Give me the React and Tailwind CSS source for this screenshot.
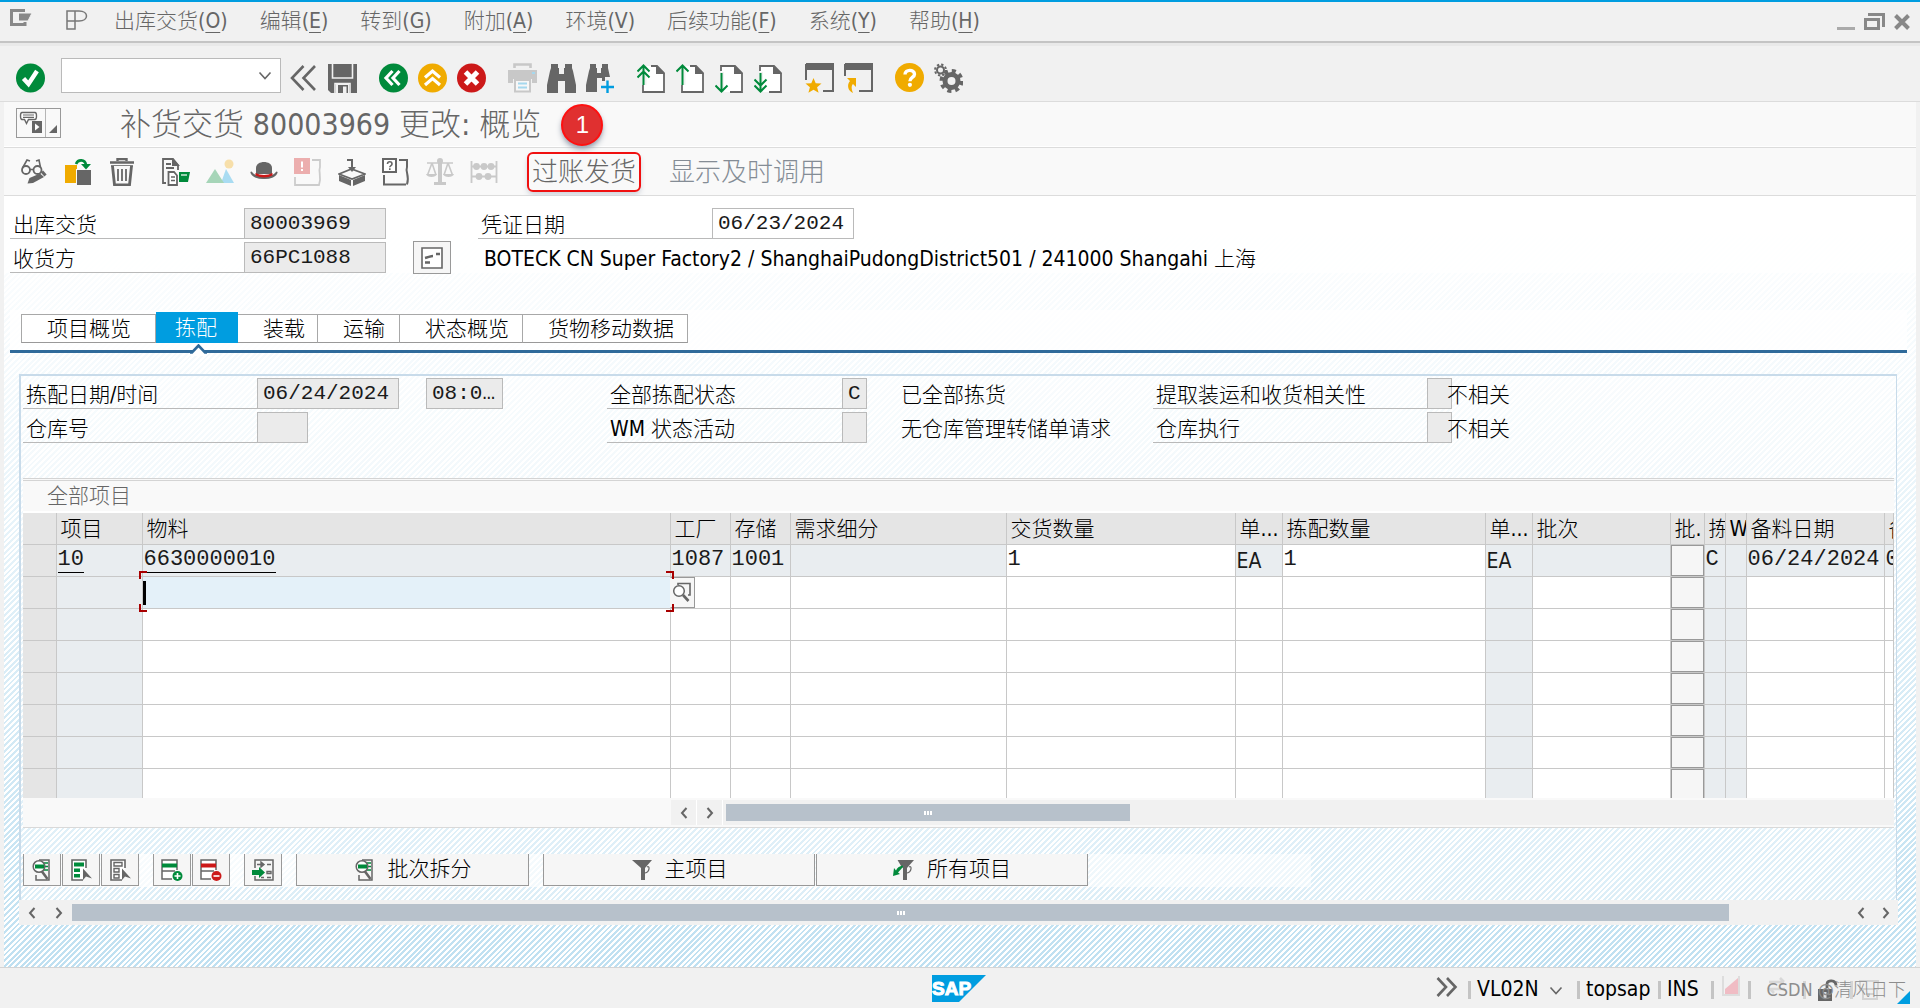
import React from "react";

const G = "#666666";
const GREEN = "#008a3b";
const BLUE = "#009de0";
const AMBER = "#f0ab00";
const RED = "#cc1919";

/* ---------- icons ---------- */

const Svg = ({ w = 29, h = 30, vb, children }) => (
  <svg width={w} height={h} viewBox={vb || `0 0 ${w} ${h}`} fill="none" className="block shrink-0" aria-hidden="true">
    {children}
  </svg>
);

const IconOk = () => (
  <Svg>
    <circle cx="14.5" cy="15" r="14.5" fill={GREEN} />
    <path d="M7.5 15.5 12.5 21 21 8" stroke="#fff" strokeWidth="4.4" />
  </Svg>
);
const IconCollapse = () => (
  <Svg>
    <path d="M14.5 3 3 15l11.500 12M26 3 14.500 15 26 27" stroke={G} strokeWidth="2.600" />
  </Svg>
);
const IconSave = () => (
  <Svg>
    <path d="M0 1h29v29H3l-3-3z" fill={G} />
    <path d="M4.500 1v14h20V1M7 30v-9.500h15V30" stroke="#f1f1f1" strokeWidth="1.600" />
    <path d="M8 21h13v9H8z" fill="#f1f1f1" />
    <path d="M10 22h10v8H10z" fill={G} />
    <path d="M15 23.500h3.500V30H15z" fill="#f1f1f1" />
  </Svg>
);
const IconBack = () => (
  <Svg>
    <circle cx="14.500" cy="15" r="14.500" fill={GREEN} />
    <path d="M13.500 8 7 15l6.500 7M20.500 8 14 15l6.500 7" stroke="#fff" strokeWidth="3.200" />
  </Svg>
);
const IconUp = () => (
  <Svg>
    <circle cx="14.500" cy="15" r="14.500" fill={AMBER} />
    <path d="M7 14.500 14.500 8l7.500 6.500M7 22l7.500-6.500L22 22" stroke="#fff" strokeWidth="3.200" />
  </Svg>
);
const IconCancel = () => (
  <Svg>
    <circle cx="14.500" cy="15" r="14.500" fill={RED} />
    <path d="m8.500 9 12 12m0-12-12 12" stroke="#fff" strokeWidth="5" />
  </Svg>
);
const IconPrint = () => (
  <Svg>
    <path d="M6.500 5V1.500h16V5" stroke="#c8c8c8" strokeWidth="2.600" />
    <path d="M0 7h29v13h-5v-4H5v4H0z" fill="#c8c8c8" />
    <path d="M7 17h15v11.500H7z" stroke="#c8c8c8" strokeWidth="2" fill="#f7f7f7" />
    <path d="M10 20.500h9M10 24.500h9M24 10h3" stroke="#a5d8ee" strokeWidth="2" />
  </Svg>
);
const IconFind = () => (
  <Svg>
    <path d="M4 1h7v4h1v6h5V5h1V1h7v4l1 3 3 14v8H18v-12h-7v12H0v-8L3 8l1-3z" fill={G} />
  </Svg>
);
const IconFindNext = () => (
  <Svg>
    <path d="M4 1h6v4h1v5h4V5h1V1h6v4l2 9h-5v4h-3v-3h-5v14H0v-7L3 8l1-3z" fill={G} />
    <path d="M15 24h13M21.500 17.500v12.500" stroke={BLUE} strokeWidth="2.400" />
  </Svg>
);
const Sheet = ({ children }) => (
  <Svg>
    <path d="M6 3h14l7 7v19H6z" fill="#fff" />
    <path d="M14 3h6l7 7v19H6v-9" stroke={G} strokeWidth="1.800" />
    <path d="M19 2v9h9z" fill={G} />
    {children}
  </Svg>
);
const IconFirst = () => (
  <Sheet>
    <path d="M6.500 3v19" stroke="#f1f1f1" strokeWidth="6" />
    <path d="M6.500 3v19M.500 8.500l6-6 6 6M.500 14.500l6-6 6 6" stroke={GREEN} strokeWidth="2" />
  </Sheet>
);
const IconPrev = () => (
  <Sheet>
    <path d="M6.500 3v19" stroke="#f1f1f1" strokeWidth="6" />
    <path d="M6.500 3v19M.500 8.500l6-6 6 6" stroke={GREEN} strokeWidth="2" />
  </Sheet>
);
const SheetDown = ({ children }) => (
  <Svg>
    <path d="M6 3h14l7 7v19H6z" fill="#fff" />
    <path d="M6 8V3h14l7 7v19H15" stroke={G} strokeWidth="1.800" />
    <path d="M19 2v9h9z" fill={G} />
    <path d="M6.500 9v20" stroke="#f1f1f1" strokeWidth="5" />
    {children}
  </Svg>
);
const IconNext = () => (
  <SheetDown>
    <path d="M6.500 10v18M.500 22.500l6 6 6-6" stroke={GREEN} strokeWidth="2" />
  </SheetDown>
);
const IconLast = () => (
  <SheetDown>
    <path d="M6.500 10v18M.500 16.500l6 6 6-6M.500 22.500l6 6 6-6" stroke={GREEN} strokeWidth="2" />
  </SheetDown>
);
const IconSession = () => (
  <Svg>
    <path d="M1 1h27v27H18M1 17V1" stroke={G} strokeWidth="2" />
    <path d="M0 1h29v6H0z" fill={G} />
    <path d="m8.500 15 2.200 5.300 5.800.300-4.400 3.700 1.500 5.500-5.100-3.100-5.100 3.100 1.500-5.500-4.400-3.700 5.800-.300z" fill={AMBER} />
  </Svg>
);
const IconShortcut = () => (
  <Svg>
    <path d="M1 1h27v27H15M1 13V1" stroke={G} strokeWidth="2" />
    <path d="M0 1h29v6H0z" fill={G} />
    <path d="M3 15h9v9l-3-3c-2 2-1.500 5 0 9-5-2-6.500-8-3-12z" fill={AMBER} />
  </Svg>
);
const IconHelp = () => (
  <Svg>
    <circle cx="14.500" cy="14.500" r="14.500" fill={AMBER} />
    <path d="M10 11.500c0-5.500 9.500-5.500 9.500-.300 0 3.300-4.600 3.300-4.600 7" stroke="#fff" strokeWidth="3.400" />
    <circle cx="14.900" cy="21.800" r="2.100" fill="#fff" />
  </Svg>
);
const IconGears = () => (
  <Svg>
    <circle cx="6.500" cy="7" r="3.500" stroke={G} strokeWidth="2" />
    <circle cx="6.500" cy="7" r="5.500" stroke={G} strokeWidth="2" strokeDasharray="2.300 2.020" />
    <circle cx="17.500" cy="18" r="6.500" stroke={G} strokeWidth="5" />
    <circle cx="17.500" cy="18" r="10" stroke={G} strokeWidth="4" strokeDasharray="4 3.850" />
  </Svg>
);

const IconGlasses = () => (
  <Svg w={28} h={28}>
    <circle cx="6" cy="12" r="4" stroke={G} strokeWidth="1.800" />
    <circle cx="17.500" cy="12" r="4" stroke={G} strokeWidth="1.800" />
    <path d="M10 11.500h4M2.500 10 7 2l3 1M20.500 9.500 19 2l-3 1" stroke={G} strokeWidth="1.600" />
    <path d="m7.500 25.500 2-5.500L20 15.500l4 3.500-11 6z" fill={G} />
    <path d="m22 13.500 3.500 4" stroke={G} strokeWidth="3" />
  </Svg>
);
const IconCopyTo = () => (
  <Svg w={28} h={28}>
    <path d="M1 7h12v4h-1v14H1z" fill={AMBER} />
    <path d="M13 12h14v15H13z" fill={G} />
    <path d="M12 6c2-5 9-5 10 1" stroke={GREEN} strokeWidth="2.600" />
    <path d="M17 6h10l-5 5.500z" fill={GREEN} />
  </Svg>
);
const IconTrash = () => (
  <Svg w={28} h={28}>
    <path d="M2 4.500h24M9.500 3V1h9v2" stroke={G} strokeWidth="2.400" />
    <path d="M3 8h22" stroke={G} strokeWidth="1.600" />
    <path d="m4.500 8 2 19h15l2-19" fill="#f9f9f9" stroke={G} strokeWidth="2.800" />
    <path d="M10 11v12M14 11v12M18 11v12" stroke={G} strokeWidth="1.800" />
  </Svg>
);
const IconDocFlow = () => (
  <Svg w={28} h={28}>
    <path d="M4 25H1V1h10l5 6v5" stroke={G} strokeWidth="1.800" />
    <path d="M10 0v8h8z" fill={G} />
    <path d="M4 6h5M4 10h8" stroke={G} strokeWidth="1.800" />
    <path d="M6.500 14H12l3 3.500V27H6.500z" fill="#fff" stroke={G} strokeWidth="1.800" />
    <path d="M9 19h4M9 22.500h4" stroke={G} strokeWidth="1.600" />
    <path d="M17 14h11l-2 10h-9z" fill={GREEN} />
    <path d="M19 17h6" stroke="#fff" strokeWidth="1.200" />
  </Svg>
);
const IconPicture = () => (
  <Svg w={28} h={28}>
    <circle cx="23" cy="6" r="4.500" fill="#f7dfaa" />
    <path d="m15 25 5-14 8 14z" fill="#a9dcf2" />
    <path d="M0 25 9 11l9 14z" fill="#a6d5b8" />
  </Svg>
);
const IconHat = () => (
  <Svg w={28} h={28}>
    <path d="M6 16V10c0-8 16-8 16 0v6z" fill={G} />
    <path d="M1 14c5 7 21 7 26 0-1 8.500-25 8.500-26 0z" stroke={G} strokeWidth="1.400" fill={G} />
    <path d="M5.500 15c5 2.500 12 2.500 17 0v2.500c-5 2.500-12 2.500-17 0z" fill={RED} />
  </Svg>
);
const IconIncomplete = () => (
  <Svg w={28} h={28}>
    <path d="M1 19v8h18M18 2h8v7c-2 5 2 9-1 18h-6" stroke="#cccccc" strokeWidth="1.800" />
    <path d="M0 0h16v16H0z" fill="#ecaeae" />
    <path d="M8 3.500v6M8 11v2" stroke="#fff" strokeWidth="2" />
  </Svg>
);
const IconPack = () => (
  <Svg w={28} h={28}>
    <path d="m1 16 12.500-5L27 16l-13 5z" stroke={G} strokeWidth="1.800" fill="#f9f9f9" />
    <path d="m1 17 12 5v6L1 23zM27 17l-12 5v6l12-5z" fill={G} />
    <path d="M9 2h5v9" stroke={G} strokeWidth="2" />
    <path d="M10 9h8l-4 5z" fill={G} />
  </Svg>
);
const IconQuestionDoc = () => (
  <Svg w={28} h={28}>
    <path d="M2 17v9.500h22M17 2h8v7c-2 5 3 9 0 17.500" stroke={G} strokeWidth="2" />
    <path d="M1 1h13v13H1z" stroke={G} strokeWidth="2" fill="#fff" />
    <path d="M5.500 6c0-3 4.500-3 4.500 0 0 1.600-2.200 1.600-2.200 3.300M7.800 10.300v1.700" stroke={G} strokeWidth="1.600" />
  </Svg>
);
const IconScales = () => (
  <Svg w={28} h={28}>
    <path d="M1 5h26M6 5 1.500 17M6 5l4 12M22 5l-4 12M22 5l4.500 12" stroke="#c9c9c9" strokeWidth="1.600" />
    <path d="M0 16h11c-1 4-10 4-11 0zM17 16h11c-1 4-10 4-11 0zM12 2h4v22h4v3H8v-3h4z" fill="#c9c9c9" />
    <circle cx="14" cy="3" r="3" fill="#c9c9c9" />
  </Svg>
);
const IconAbacus = () => (
  <Svg w={28} h={28}>
    <path d="M1.500 3v22M26.500 3v22M1 8.500h26M1 18.500h26" stroke="#c9c9c9" strokeWidth="1.800" />
    <g fill="#c9c9c9">
      <circle cx="6.500" cy="8.500" r="3.400" /><circle cx="14" cy="8.500" r="3.400" /><circle cx="21" cy="8.500" r="3.400" />
      <circle cx="9" cy="18.500" r="3.400" /><circle cx="18" cy="18.500" r="3.400" />
    </g>
  </Svg>
);
const IconServices = () => (
  <Svg w={24} h={24}>
    <path d="M3 1.500h13c2 0 2 7 0 7h-6.500l-2 4-2-4H3c-2 0-2-7 0-7z" stroke={G} strokeWidth="1.400" fill="#fff" />
    <path d="M4 4h11M4 6.300h11" stroke={G} strokeWidth="1.200" />
    <path d="M13 10h10v12H13z" fill={G} />
    <path d="M16 12.500v7l4.500-3.500z" fill="#fff" />
  </Svg>
);

const IconDetail = () => (
  <Svg w={22} h={22}>
    <path d="M8 1h10v20H5v-5" stroke={G} strokeWidth="1.500" />
    <path d="M13 4h4M13 7.500h4M13 11h4" stroke={GREEN} strokeWidth="1.500" />
    <circle cx="8" cy="7.500" r="5.800" fill="#fff" stroke={G} strokeWidth="1.500" />
    <path d="M4 5.500h9v4H4z" fill={GREEN} />
    <path d="m11 12.500 5.500 7.500" stroke={G} strokeWidth="2.600" />
  </Svg>
);
const IconSelect = ({ on }) => (
  <Svg w={22} h={22}>
    <path d="M16 9V1H2v20h11" stroke={G} strokeWidth="1.600" fill="#fff" />
    {on ? (
      <path d="M4 3.500h10v4H4zM4 9.500h6v3.500H4zM4 15h6v3.500H4z" fill={GREEN} />
    ) : (
      <path d="M5 3.500h8V7H5zM5 9.500h5v3.500H5zM5 15.500h5V19H5z" stroke={G} strokeWidth="1.400" />
    )}
    <path d="M13 9.500V21l3-3.500 6 2z" fill={G} />
  </Svg>
);
const IconRow = ({ add }) => (
  <Svg w={22} h={22}>
    <path d="M16 11V1H1v19h10M1 12h13" stroke={G} strokeWidth="1.500" fill="#fff" />
    <path d="M1 4.500h15v4H1z" fill={add ? GREEN : RED} />
    <circle cx="16.500" cy="17" r="5" fill={add ? GREEN : RED} />
    <path d={add ? "M13.500 17h6M16.500 14v6" : "M13.500 17h6"} stroke="#fff" strokeWidth="1.600" />
  </Svg>
);
const IconConfig = () => (
  <Svg w={22} h={22}>
    <path d="M3 9V1h18v20H3v-4" stroke={G} strokeWidth="1.500" />
    <path d="M5 5.500h6M9 3l3 2.500L9 8zM15 5.500h4M15 12.500h4v2h-4zM9 18.500h3M15 18.500h4" stroke={G} strokeWidth="1.400" />
    <path d="M0 11h7V8l6 5.500-6 5.500v-3H0z" fill={GREEN} />
  </Svg>
);
const IconFilter = ({ undo }) => (
  <Svg w={22} h={22}>
    <path d="M1 1h20l-7 8v12h-4V9z" fill={G} />
    <path d="M16 8c3-2 3 5-2 6" stroke={G} strokeWidth="1.200" />
    {undo && (
      <>
        <path d="M0 0h4l4 7H0z" fill="#f6f6f6" />
        <path d="M1 9 0 17l7-2-2-1.500 5-5.500V6.500C6 7 4 9 3 11.500z" fill={GREEN} />
      </>
    )}
  </Svg>
);
const IconMatch = () => (
  <Svg w={20} h={20}>
    <path d="M6 3V1.500h12V13h-2" stroke={G} strokeWidth="1.600" />
    <circle cx="7" cy="9" r="5.300" stroke={G} strokeWidth="1.500" fill="#fff" />
    <path d="m11 13 5.500 6" stroke={G} strokeWidth="2.600" />
  </Svg>
);
const Chevron = ({ dir }) => (
  <Svg w={8} h={12}>
    <path d={dir === "left" ? "M6.500 1 2 6l4.500 5" : "M1.500 1 6 6l-4.500 5"} stroke="#666" strokeWidth="2" />
  </Svg>
);
const ChevronDown = () => (
  <Svg w={14} h={9}>
    <path d="m1.500 1.500 5.500 6 5.500-6" stroke="#666" strokeWidth="1.600" />
  </Svg>
);
const SapLogo = () => (
  <svg width="54" height="27" viewBox="0 0 54 27" className="block" role="img" aria-label="SAP">
    <path d="M0 0h54L27 27H0z" fill={BLUE} />
    <text x="0" y="20" fill="#fff" stroke="#fff" strokeWidth="1" fontFamily="Liberation Sans, sans-serif" fontWeight="700" fontSize="19">SAP</text>
  </svg>
);

/* ---------- parts ---------- */

const Key = ({ text, k }) => (
  <button type="button" className="whitespace-nowrap">
    {text}(<u className="decoration-1 underline-offset-4">{k}</u>)
  </button>
);

const Tool = ({ label, children }) => (
  <button type="button" aria-label={label} className="shrink-0">{children}</button>
);

const Label = ({ id, w = "w-[234px]", children }) => (
  <label htmlFor={id} className={`h-[31px] shrink-0 border-b border-[#b9b9b9] pt-0.5 pl-[3px] leading-[30px] whitespace-nowrap ${w}`}>
    {children}
  </label>
);

const Field = ({ id, w = "w-[142px]", value = "", edit, label }) => (
  <input
    id={id}
    aria-label={label}
    readOnly={!edit}
    defaultValue={value}
    className={`h-[31px] shrink-0 border border-[#bababa] px-[5px] font-['Liberation_Mono',monospace] text-[21px] text-ellipsis text-[#1a1a1a] outline-none ${edit ? "bg-white" : "bg-[#ebebeb]"} ${w}`}
  />
);

const menus = [
  ["出库交货", "O"], ["编辑", "E"], ["转到", "G"], ["附加", "A"],
  ["环境", "V"], ["后续功能", "F"], ["系统", "Y"], ["帮助", "H"],
];

const tabs = [
  ["项目概览", "w-[135px] pl-[25px]"],
  ["拣配", "w-[82px] pl-[19px]"],
  ["装载", "w-[80px] pl-[25px]"],
  ["运输", "w-[82px] pl-[25px]"],
  ["状态概览", "w-[123px] pl-[25px]"],
  ["货物移动数据", "w-[165px] pl-[25px]"],
];

const cols = [
  { w: "w-[33px]", h: "" },
  { w: "w-[86px]", h: "项目" },
  { w: "w-[528px]", h: "物料" },
  { w: "w-[60px]", h: "工厂" },
  { w: "w-[60px]", h: "存储" },
  { w: "w-[216px]", h: "需求细分" },
  { w: "w-[229px]", h: "交货数量" },
  { w: "w-[47px]", h: "单..." },
  { w: "w-[203px]", h: "拣配数量" },
  { w: "w-[47px]", h: "单..." },
  { w: "w-[138px]", h: "批次" },
  { w: "w-[34px]", h: "批." },
  { w: "w-[21px]", h: "拣" },
  { w: "w-[21px]", h: "W" },
  { w: "w-[138px]", h: "备料日期" },
  { w: "", h: "备" },
];
const first = ["", "10", "6630000010", "1087", "1001", "", "1", "EA", "1", "EA", "", "", "C", "", "06/24/2024", "0"];

const Cell = ({ row, col }) => {
  const base = "relative h-8 border-b border-r border-[#c8c8c8] p-0 align-middle whitespace-nowrap";
  if (col === 0) return <td className={`${base} bg-[#e5e5e5]`} />;
  if (col === 11)
    return (
      <td className={`${base} bg-white`}>
        <button type="button" aria-label="批次拆分" className="block h-[31px] w-full border border-[#999] bg-[#f6f6f6]" />
      </td>
    );
  if (row === 1 && col === 2)
    return (
      <td className={`${base} z-10 overflow-visible bg-[#e4f1f9]`}>
        <input aria-label="物料" className="block h-[31px] w-full bg-transparent px-1 font-['Liberation_Mono',monospace] text-[22px] outline-none" />
        <span className="absolute top-1 left-0 h-6 w-[3px] bg-black" />
        <span className="absolute -top-1.5 -left-1 h-2 w-2 border-t-2 border-l-2 border-[#a80000]" />
        <span className="absolute -bottom-1 -left-1 h-2 w-2 border-b-2 border-l-2 border-[#a80000]" />
        <button type="button" aria-label="搜索帮助" className="absolute top-0 left-full flex h-[31px] w-[25px] items-center justify-center border border-[#999] border-l-transparent bg-[#f6f6f6]">
          <IconMatch />
        </button>
        <span className="absolute -top-1.5 -right-1 h-2 w-2 border-t-2 border-r-2 border-[#a80000]" />
        <span className="absolute -right-1 -bottom-1 h-2 w-2 border-r-2 border-b-2 border-[#a80000]" />
      </td>
    );
  const shaded = [1, 9, 12, 13].includes(col) || (row === 0 && col !== 6 && col !== 8);
  const text = row === 0 ? first[col] : "";
  const unit = col === 7 || col === 9;
  return (
    <td className={`${base} overflow-hidden pl-px ${shaded ? "bg-[#e9edf0]" : "bg-white"} ${unit ? "pt-0.5 text-[21px]" : "font-['Liberation_Mono',monospace] text-[22px]"} leading-none text-[#1a1a1a]`}>
      {text && (col === 1 || col === 2) ? (
        <a href="#item" className="block h-[25px] w-fit border-b border-black pt-px">{text}</a>
      ) : (
        text
      )}
    </td>
  );
};

const Grip = () => (
  <span className="flex gap-px">
    <i className="h-1 w-0.5 bg-white" />
    <i className="h-1 w-0.5 bg-white" />
    <i className="h-1 w-0.5 bg-white" />
  </span>
);

const IconButton = ({ label, children }) => (
  <button type="button" aria-label={label} className="flex h-8 w-[38px] items-center justify-center border border-t-0 border-[#999] bg-[#f6f6f6]">
    {children}
  </button>
);
const TextButton = ({ w, icon, children }) => (
  <button type="button" className={`flex h-8 items-center justify-center gap-3 border border-t-0 border-[#999] bg-[#f6f6f6] ${w}`}>
    {icon}
    {children}
  </button>
);

const Bar = () => <span className="h-[18px] w-[3px] shrink-0 bg-[#c4c4c4]" />;

export default function App() {
  return (
    <div className="flex min-h-screen flex-col overflow-x-hidden bg-[#f1f1f1] font-['DejaVu_Sans_Condensed','Noto_Sans_CJK_SC',sans-serif] text-[21px] font-light text-black">
      {/* menu bar */}
      <header className="flex h-[43px] shrink-0 items-center border-t-2 border-b-2 border-t-[#009de0] border-b-[#c4c4c4] pl-2.5 text-[#666]">
        <button type="button" aria-label="系统菜单" className="-mt-2 mr-[34px]">
          <Svg w={22} h={17}>
            <path d="M15 1.500H1.500v14H15V13" stroke="#888" strokeWidth="3" />
            <path d="M7 4h15l-4 8H8z" fill="#888" stroke="#f1f1f1" strokeWidth="1" />
            <path d="M4 4h5v8H4z" fill="#f1f1f1" />
          </Svg>
        </button>
        <button type="button" aria-label="会话" className="mr-[26px] -mt-1">
          <Svg w={22} h={20}>
            <path d="M1 19V1h12c10 0 10 10 0 10H9v8zM1 11h8V1" stroke="#777" strokeWidth="1.500" />
          </Svg>
        </button>
        <nav className="flex flex-1 items-center gap-8">
          {menus.map(([t, k]) => <Key key={k} text={t} k={k} />)}
        </nav>
        <div className="flex items-center gap-[9px] pr-2.5">
          <button type="button" aria-label="最小化"><Svg w={18} h={17}><path d="M0 14h18v3H0z" fill="#aaa" /></Svg></button>
          <button type="button" aria-label="还原">
            <Svg w={21} h={17}>
              <path d="M1.500 6.500h13v9h-13z" stroke="#888" strokeWidth="3" />
              <path d="M4 1.500h15.500V14" stroke="#888" strokeWidth="3" />
            </Svg>
          </button>
          <button type="button" aria-label="关闭"><Svg w={16} h={17}><path d="m1.500 2.500 13 13m0-13-13 13" stroke="#888" strokeWidth="4" /></Svg></button>
        </div>
      </header>

      {/* standard toolbar */}
      <div className="flex h-[59px] shrink-0 items-center gap-2.5 border-t-[3px] border-b border-t-[#e9e9e9] border-b-[#dcdcdc] pt-2 pl-4">
        <Tool label="确认"><IconOk /></Tool>
        <div className="-mt-1 -mr-0.5 ml-1.5 flex h-[35px] w-[220px] items-center border border-[#bababa] bg-white pr-2">
          <input aria-label="命令" className="h-full min-w-0 flex-1 px-2 outline-none" />
          <button type="button" aria-label="命令历史"><ChevronDown /></button>
        </div>
        <Tool label="折叠"><IconCollapse /></Tool>
        <Tool label="保存"><IconSave /></Tool>
        <span className="w-0.5" />
        <Tool label="返回"><IconBack /></Tool>
        <Tool label="退出"><IconUp /></Tool>
        <Tool label="取消"><IconCancel /></Tool>
        <span className="w-0.5" />
        <Tool label="打印"><IconPrint /></Tool>
        <Tool label="查找"><IconFind /></Tool>
        <Tool label="查找下一个"><IconFindNext /></Tool>
        <span className="w-0.5" />
        <Tool label="首页"><IconFirst /></Tool>
        <Tool label="上一页"><IconPrev /></Tool>
        <Tool label="下一页"><IconNext /></Tool>
        <Tool label="末页"><IconLast /></Tool>
        <span className="w-0.5" />
        <Tool label="新建会话"><IconSession /></Tool>
        <Tool label="创建快捷方式"><IconShortcut /></Tool>
        <span className="w-0.5" />
        <Tool label="帮助"><IconHelp /></Tool>
        <Tool label="自定义布局"><IconGears /></Tool>
      </div>

      <main className="mx-1 flex flex-1 flex-col bg-[#f9f9f9]">
        {/* title */}
        <div className="flex h-[46px] items-center border-b border-[#dcdcdc] pl-3 shadow-[inset_0_-1px_0_#fff]">
          <button type="button" aria-label="对象服务" className="-mt-1 flex h-[30px] w-[45px] border border-[#999]">
            <span className="flex h-full w-[29px] items-center justify-center border-r border-[#b5b5b5]"><IconServices /></span>
            <span className="flex h-full flex-1 items-end justify-center pb-1"><Svg w={8} h={8}><path d="M8 0v8H0z" fill={G} /></Svg></span>
          </button>
          <h1 className="ml-[59px] text-[31px] leading-10 whitespace-nowrap text-[#666]">
            补货交货 <span className="text-[30px]">80003969</span> 更改: 概览
          </h1>
          <span className="ml-5 flex size-[42px] items-center justify-center rounded-full border-2 border-[#ff1010] bg-[#e03030] font-['Liberation_Sans',sans-serif] text-2xl font-normal text-white shadow-md shadow-gray-400">1</span>
        </div>

        {/* application toolbar */}
        <div className="flex h-12 items-center border-b border-[#dcdcdc] pl-4 text-[26px] text-[#666]">
          <div className="flex items-center">
            <div className="flex items-center gap-4">
              <Tool label="显示更改"><IconGlasses /></Tool>
              <Tool label="其他交货"><IconCopyTo /></Tool>
              <Tool label="删除"><IconTrash /></Tool>
            </div>
            <div className="ml-[26px] flex items-center gap-4">
              <Tool label="凭证流"><IconDocFlow /></Tool>
              <Tool label="概览"><IconPicture /></Tool>
              <Tool label="抬头"><IconHat /></Tool>
              <Tool label="不完整"><IconIncomplete /></Tool>
              <Tool label="包装"><IconPack /></Tool>
              <Tool label="文本"><IconQuestionDoc /></Tool>
              <Tool label="重量"><IconScales /></Tool>
              <Tool label="数量"><IconAbacus /></Tool>
            </div>
          </div>
          <button type="button" className="ml-[29px] flex h-10 items-center rounded-md border-2 border-[#f01010] px-[3px] pt-0.5 whitespace-nowrap shadow-md shadow-gray-300">过账发货</button>
          <button type="button" className="ml-7 pt-0.5 whitespace-nowrap text-[#848c95]">显示及时调用</button>
        </div>

        {/* work area */}
        <div className="flex flex-1 flex-col bg-[linear-gradient(to_bottom,#ffffff_0%,rgba(255,255,255,0.82)_25%,rgba(255,255,255,0)_100%),repeating-linear-gradient(135deg,#bfe0f1_0px,#bfe0f1_2px,#ffffff_2px,#ffffff_4px)]">
          <section className="flex flex-col gap-[3px] bg-white/80 pt-3 pl-1.5">
            <div className="flex">
              <Label id="dlv">出库交货</Label>
              <Field id="dlv" value="80003969" />
              <span className="w-[92px] shrink-0" />
              <Label id="docdate">凭证日期</Label>
              <Field id="docdate" value="06/23/2024" edit />
            </div>
            <div className="flex">
              <Label id="ship">收货方</Label>
              <Field id="ship" value="66PC1088" />
              <button type="button" aria-label="地址详情" className="-my-px ml-[27px] flex h-[33px] w-[38px] shrink-0 items-center justify-center border border-[#999] bg-[#f6f6f6]">
                <Svg w={22} h={22}>
                  <path d="M1 1h20v20H1z" stroke={G} strokeWidth="1.600" fill="#fff" />
                  <path d="M4 11c4-1 6-2 8-2M15 7h4M4 15.500h5" stroke={G} strokeWidth="2.400" />
                </Svg>
              </button>
              <span className="ml-[33px] h-[31px] leading-[34px] whitespace-nowrap">BOTECK CN Super Factory2 / ShanghaiPudongDistrict501 / 241000 Shangahi 上海</span>
            </div>
          </section>

          {/* tabs */}
          <div className="mt-[37px] mr-[9px] ml-1.5 flex h-[43px] flex-col border-b-[3px] border-[#2f6a9a] bg-white/80 pl-[11px]">
            <div role="tablist" className="flex items-end pt-0.5">
              {tabs.map(([t, c], i) =>
                i === 1 ? (
                  <button key={t} role="tab" aria-selected="true" type="button" className={`relative h-[31px] bg-[#009de0] text-left leading-[32px] text-white ${c}`}>
                    {t}
                    <svg width="17" height="12" viewBox="0 0 17 12" className="absolute top-8 left-[34px]" aria-hidden="true">
                      <path d="M0 12 8.500 1 17 12z" fill="#fff" />
                      <path d="M0 8.500h2L8.500 1.500 15 8.500h2" fill="none" stroke="#2f6a9a" strokeWidth="2.600" />
                    </svg>
                  </button>
                ) : (
                  <button key={t} role="tab" aria-selected="false" type="button" className={`h-[29px] border-y border-r border-[#a8a8a8] border-b-[#999] bg-white text-left leading-[28px] whitespace-nowrap first:border-l ${c}`}>
                    {t}
                  </button>
                )
              )}
            </div>
          </div>

          {/* picking panel */}
          <div className="mt-[21px] mr-[19px] ml-[15px] border-t-2 border-r border-l-2 border-[#c8dbea] bg-white/40 pr-0.5 pl-0.5">
            <div className="flex flex-col gap-[3px] pt-0.5 pb-[35px]">
              <div className="flex h-[31px]">
                <Label id="pdate">拣配日期/时间</Label>
                <Field id="pdate" value="06/24/2024" />
                <Field label="时间" w="ml-[27px] w-[77px]" value="08:00:00" />
                <span className="w-[104px] shrink-0" />
                <Label id="pstat" w="w-[235px]">全部拣配状态</Label>
                <Field id="pstat" w="w-[25px]" value="C" />
                <span className="w-[251px] shrink-0 pl-[34px] leading-[34px] whitespace-nowrap">已全部拣货</span>
                <span className="w-[35px] shrink-0" />
                <Label id="pod" w="w-[274px]">提取装运和收货相关性</Label>
                <Field id="pod" w="w-[25px]" />
                <span className="relative -ml-[5px] leading-[34px]">不相关</span>
              </div>
              <div className="flex h-[31px]">
                <Label id="wh">仓库号</Label>
                <Field id="wh" w="w-[51px]" />
                <span className="w-[299px] shrink-0" />
                <Label id="wm" w="w-[235px]">WM 状态活动</Label>
                <Field id="wm" w="w-[25px]" />
                <span className="w-[251px] shrink-0 pl-[34px] leading-[34px] whitespace-nowrap">无仓库管理转储单请求</span>
                <span className="w-[35px] shrink-0" />
                <Label id="exec" w="w-[274px]">仓库执行</Label>
                <Field id="exec" w="w-[25px]" />
                <span className="relative -ml-[5px] leading-[34px]">不相关</span>
              </div>
            </div>

            <section className="border-t-[3px] border-double border-[#d4d4d4] bg-[#f9f9f9]">
              <h2 className="flex h-8 items-center border-b-2 border-white pt-0.5 pl-6 text-[#666]">全部项目</h2>
              <div className="h-[285px] overflow-hidden">
                <table className="w-full table-fixed border-collapse">
                  <colgroup>{cols.map((c, i) => <col key={i} className={c.w} />)}</colgroup>
                  <thead>
                    <tr className="bg-[#e5e5e5]">
                      {cols.map((c, i) => (
                        <th key={i} className="h-[31px] overflow-hidden border-r border-b border-[#c8c8c8] p-0 pt-0.5 pl-1 text-left leading-none font-light whitespace-nowrap">
                          {c.h}
                        </th>
                      ))}
                    </tr>
                  </thead>
                  <tbody>
                    {[0, 1, 2, 3, 4, 5, 6, 7].map((r) => (
                      <tr key={r}>{cols.map((_, c) => <Cell key={c} row={r} col={c} />)}</tr>
                    ))}
                  </tbody>
                </table>
              </div>
              <div className="flex h-[30px] items-center border-b border-[#d9d9d9] pl-[648px]">
                <div className="flex h-[25px] flex-1 items-center bg-[#f1f1f1]">
                  <button type="button" aria-label="向左滚动" className="flex h-full w-[26px] items-center justify-center border-r border-white"><Chevron dir="left" /></button>
                  <button type="button" aria-label="向右滚动" className="flex h-full w-[26px] items-center justify-center border-r border-white"><Chevron dir="right" /></button>
                  <div className="ml-[3px] flex h-[17px] w-[404px] items-center justify-center bg-[#b7c1cb]"><Grip /></div>
                </div>
              </div>
            </section>

            <div className="mt-[26px] mb-[13px] flex h-[33px] w-[1288px] max-w-full gap-3.5 bg-linear-to-r from-white/80 to-white/50">
              <div className="flex gap-px">
                <IconButton label="明细"><IconDetail /></IconButton>
                <IconButton label="全选"><IconSelect on /></IconButton>
                <IconButton label="取消全选"><IconSelect /></IconButton>
              </div>
              <div className="flex gap-px">
                <IconButton label="插入行"><IconRow add /></IconButton>
                <IconButton label="删除行"><IconRow /></IconButton>
              </div>
              <IconButton label="配置"><IconConfig /></IconButton>
              <TextButton w="w-[233px]" icon={<IconDetail />}>批次拆分</TextButton>
              <div className="flex gap-px">
                <TextButton w="w-[272px]" icon={<IconFilter />}>主项目</TextButton>
                <TextButton w="w-[272px]" icon={<IconFilter undo />}>所有项目</TextButton>
              </div>
            </div>
          </div>

          <div className="mr-[18px] mb-[42px] ml-[15px] flex h-[25px] items-center bg-[#f1f1f1]">
            <button type="button" aria-label="向左滚动" className="flex h-full w-[26px] items-center justify-center"><Chevron dir="left" /></button>
            <button type="button" aria-label="向右滚动" className="flex h-full w-[27px] items-center justify-center"><Chevron dir="right" /></button>
            <div className="flex h-[17px] flex-1 items-center justify-center bg-[#b7c1cb]"><Grip /></div>
            <span className="w-[119px] shrink-0" />
            <button type="button" aria-label="向左滚动" className="flex h-full w-[25px] items-center justify-center"><Chevron dir="left" /></button>
            <button type="button" aria-label="向右滚动" className="flex h-full w-[25px] items-center justify-center"><Chevron dir="right" /></button>
          </div>
        </div>
      </main>

      {/* status bar */}
      <footer className="relative flex h-[41px] shrink-0 items-center border-t border-[#d4d4d4]">
        <div className="flex flex-1 justify-end pr-[450px]"><SapLogo /></div>
        <div className="flex items-center pt-1">
          <button type="button" aria-label="展开" className="mr-2.5 mb-1.5">
            <Svg w={22} h={20}><path d="m1.500 1 8.500 9-8.500 9M11 1l8.500 9-8.500 9" stroke={G} strokeWidth="2.600" /></Svg>
          </button>
          <Bar />
          <button type="button" className="ml-1.5 flex w-[100px] items-center gap-2.5 whitespace-nowrap">VL02N <ChevronDown /></button>
          <Bar />
          <span className="ml-1.5 w-[72px] whitespace-nowrap">topsap</span>
          <Bar />
          <span className="ml-1.5 w-[44px]">INS</span>
          <Bar />
          <span className="mx-2 mb-2"><Svg w={18} h={20}><path d="M1 0v20M17 0v20M0 19h18" stroke="#ddd" strokeWidth="2" /><path d="M3 18v-5L16 2v16z" fill="#f0bcc4" /></Svg></span>
          <Bar />
          <span className="ml-4 flex h-7 w-[153px] items-center">
            <span className="mb-2"><Svg w={20} h={18}><path d="M2 5h15m-4-4 4 4M18 12H3l4 4" stroke="#d8d8d8" strokeWidth="2.600" /></Svg></span>
            <span className="mr-1.5 ml-4 h-[18px] w-[3px] bg-[#d4d4d4]" />
            <span className="ml-1.5"><Svg w={20} h={22}><path d="M9 9V5c0-4.500 9-4.500 9 1.500" stroke="#666" strokeWidth="2.800" /><path d="M0 10h14v12H0z" fill="#666" /><path d="M7 13v6" stroke="#ddd" strokeWidth="3" /></Svg></span>
            <span className="mr-1.5 ml-3 h-[18px] w-[3px] bg-[#d4d4d4]" />
            <Svg w={20} h={22}><path d="M1 2h18v8H1zM4 10v10h14V10M7 15h8" stroke="#d4d4d4" strokeWidth="2" /></Svg>
          </span>
        </div>
        <span className="absolute right-3.5 bottom-1 text-lg whitespace-nowrap text-[#8d8d8d]">CSDN @清风日下</span>
        <svg width="13" height="13" viewBox="0 0 13 13" className="absolute right-2.5 bottom-1" aria-hidden="true"><path d="M13 0v13H0z" fill={BLUE} /></svg>
      </footer>
    </div>
  );
}
